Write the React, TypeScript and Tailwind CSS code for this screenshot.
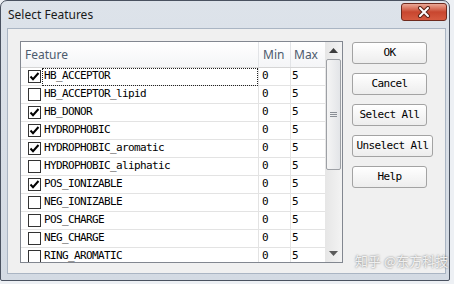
import React from "react";

const rows: { name: string; checked: boolean }[] = [
  { name: "HB_ACCEPTOR", checked: true },
  { name: "HB_ACCEPTOR_lipid", checked: false },
  { name: "HB_DONOR", checked: true },
  { name: "HYDROPHOBIC", checked: true },
  { name: "HYDROPHOBIC_aromatic", checked: true },
  { name: "HYDROPHOBIC_aliphatic", checked: false },
  { name: "POS_IONIZABLE", checked: true },
  { name: "NEG_IONIZABLE", checked: false },
  { name: "POS_CHARGE", checked: false },
  { name: "NEG_CHARGE", checked: false },
  { name: "RING_AROMATIC", checked: false },
];

const mono = "font-['DejaVu_Sans_Mono',monospace] text-[11px] tracking-[-0.62px] text-black";

function CheckBox({ checked }: { checked: boolean }) {
  return (
    <div className="w-[13px] h-[13px] border border-[#333333] bg-white flex items-center justify-center shrink-0">
      {checked && (
        <svg width="11" height="11" viewBox="0 0 11 11">
          <path d="M1.5 5.5 L4 8.2 L9.5 2" fill="none" stroke="#000" strokeWidth="2" />
        </svg>
      )}
    </div>
  );
}

function Btn({ label, w }: { label: string; w: string }) {
  return (
    <div
      className={`${w} h-[22px] rounded-[3px] border border-[#a3a3a3] bg-gradient-to-b from-[#ffffff] to-[#ededed] flex items-center justify-center ${mono}`}
    >
      {label}
    </div>
  );
}

export default function App() {
  return (
    <div className="w-[454px] h-[284px] bg-[#edf0f4] relative overflow-hidden">
      <div className="w-[450px] h-[281px] rounded-t-[7px] rounded-b-[2px] border border-[#4a5260] bg-gradient-to-b from-[#dde3ea] via-[#d8dee6] to-[#d3dae3] flex flex-col">
        {/* title bar */}
        <div className="h-[27px] flex items-start shrink-0">
          <div className="pl-[7px] pt-[6px] text-[12px] leading-[16px] text-[#1a1a1a] font-['Noto_Sans',sans-serif]">
            Select Features
          </div>
          <div className="ml-auto mr-[2px] mt-[2px] w-[46px] h-[18px] rounded-[3px] border border-[#6e2a1e] bg-gradient-to-b from-[#e9a796] via-[#c8462f] to-[#d65a40] flex items-center justify-center">
            <svg width="14" height="12" viewBox="0 0 14 12">
              <path d="M3 2 L11 10 M11 2 L3 10" stroke="#5a2418" strokeWidth="4" strokeLinecap="round" />
              <path d="M3 2 L11 10 M11 2 L3 10" stroke="#ffffff" strokeWidth="2" strokeLinecap="round" />
            </svg>
          </div>
        </div>
        {/* client */}
        <div className="ml-[6px] mr-[3px] h-[246px] border border-[#aab5c3] bg-[#f0f0f0] flex pl-[12px] pt-[12px]">
          {/* list */}
          <div className="w-[323px] h-[222px] border border-[#828790] bg-white flex shrink-0">
            <div className="w-[304px] flex flex-col overflow-hidden">
              <div className="h-[26px] shrink-0 flex border-b border-[#d5d5d5] bg-gradient-to-b from-[#ffffff] to-[#f4f5f7] font-['Noto_Sans',sans-serif] text-[12px] text-[#4d5b6d]">
                <div className="w-[238px] border-r border-[#e2e4e7] pl-[4px] flex items-center">Feature</div>
                <div className="w-[32px] border-r border-[#e2e4e7] pl-[4px] flex items-center">Min</div>
                <div className="w-[34px] pl-[3px] flex items-center">Max</div>
              </div>
              {rows.map((r, i) => (
                <div key={r.name} className="h-[18px] shrink-0 flex border-b border-[#e3e3e3]">
                  <div className="w-[238px] border-r border-[#e3e3e3] flex items-center pl-[7px]">
                    <CheckBox checked={r.checked} />
                    <div
                      className={`ml-[1px] flex-1 h-[18px] flex items-center pl-[1px] border ${
                        i === 0 ? "border-dotted border-[#222222]" : "border-transparent"
                      } ${mono}`}
                    >
                      {r.name}
                    </div>
                  </div>
                  <div className={`w-[32px] border-r border-[#e3e3e3] pl-[3px] flex items-center ${mono}`}>0</div>
                  <div className={`w-[34px] pl-[1px] flex items-center ${mono}`}>5</div>
                </div>
              ))}
            </div>
            {/* scrollbar */}
            <div className="w-[17px] h-full flex flex-col bg-gradient-to-r from-[#e6e6e6] to-[#f3f3f3]">
              <div className="h-[17px] flex items-center justify-center shrink-0">
                <svg width="9" height="5" viewBox="0 0 9 5">
                  <path d="M0 5 L4.5 0 L9 5 Z" fill="#3c3c3c" />
                </svg>
              </div>
              <div className="ml-[1px] mr-[1px] h-[111px] rounded-[2px] border border-[#9da0a5] bg-gradient-to-r from-[#f5f5f5] to-[#e3e5e8] flex flex-col items-center justify-center gap-[1px]">
                <div className="w-[7px] h-[1px] bg-[#8a8f96]" />
                <div className="w-[7px] h-[1px] bg-[#8a8f96]" />
                <div className="w-[7px] h-[1px] bg-[#8a8f96]" />
              </div>
              <div className="flex-1" />
              <div className="h-[17px] flex items-center justify-center shrink-0">
                <svg width="9" height="5" viewBox="0 0 9 5">
                  <path d="M0 0 L4.5 5 L9 0 Z" fill="#5a5a5a" />
                </svg>
              </div>
            </div>
          </div>
          {/* buttons */}
          <div className="ml-[9px] mt-[1px] flex flex-col gap-[9px]">
            <Btn label="OK" w="w-[75px]" />
            <Btn label="Cancel" w="w-[75px]" />
            <Btn label="Select All" w="w-[75px]" />
            <Btn label="Unselect All" w="w-[81px]" />
            <Btn label="Help" w="w-[75px]" />
          </div>
        </div>
      </div>
      <div className="absolute left-[355px] top-[252px] whitespace-nowrap text-[13px] leading-[18px] text-white/85 font-['Noto_Sans_CJK_SC',sans-serif] [text-shadow:0_0_2px_rgba(60,60,60,0.8)]">
        知乎 @东方科技
      </div>
    </div>
  );
}
